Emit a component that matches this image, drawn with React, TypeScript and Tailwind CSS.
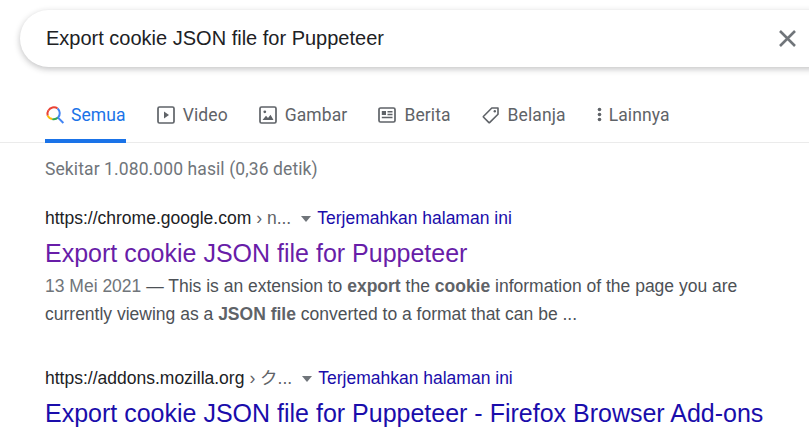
import React from "react";

const Tab = ({ icon, label, gap = "gap-[8px]", active = false }: { icon: React.ReactNode; label: string; gap?: string; active?: boolean }) => (
  <div className={`relative flex h-[58px] items-center ${gap} ${active ? "text-[#1a73e8]" : "text-[#5f6368]"}`}>
    {icon}
    <span className="pt-[4px] text-[17.5px] leading-none tracking-[0.1px]">{label}</span>
    {active && <div className="absolute bottom-0 left-0 right-0 h-[4px] bg-[#1a73e8]" />}
  </div>
);

const G = "#5f6368";
const SearchIcon = () => (
  <svg width="20" height="20" viewBox="0 0 20 20" fill="none" strokeWidth="2" className="mt-[2px]">
    <path d="M12.6 3.5A6.3 6.3 0 0 0 3.3 5.6" stroke="#ea4335" />
    <path d="M3.3 5.6a6.3 6.3 0 0 0-.6 5" stroke="#ea4335" />
    <path d="M2.7 10.6a6.3 6.3 0 0 0 4.6 3.5" stroke="#fbbc05" />
    <path d="M7.3 14.1a6.3 6.3 0 0 0 5.7-1.5" stroke="#34a853" />
    <path d="M13 12.6a6.3 6.3 0 0 0-.4-9.1" stroke="#4285f4" />
    <path d="M13 12.6l5.4 5.4" stroke="#4285f4" />
  </svg>
);
const VideoIcon = () => (
  <svg width="18" height="18" viewBox="0 0 18 18" fill="none" className="mt-[2px]">
    <rect x="1" y="1" width="16" height="16" rx="1.5" stroke={G} strokeWidth="1.7" />
    <path d="M7 5.5v7l5-3.5z" fill={G} />
  </svg>
);
const ImageIcon = () => (
  <svg width="18" height="18" viewBox="0 0 18 18" fill="none" className="mt-[2px]">
    <rect x="1" y="1" width="16" height="16" rx="1.5" stroke={G} strokeWidth="1.7" />
    <circle cx="5.8" cy="5.8" r="1.4" fill={G} />
    <path d="M3.5 14l3.5-4.2 2 2.2 2.5-3.2 3 5.2z" fill={G} />
  </svg>
);
const NewsIcon = () => (
  <svg width="18" height="18" viewBox="0 0 18 18" fill="none" className="mt-[2px]">
    <rect x="1" y="2" width="16" height="14" rx="1.5" stroke={G} strokeWidth="1.7" />
    <rect x="3.8" y="5" width="4.2" height="4" fill={G} />
    <path d="M9.5 5.7h5M9.5 8.4h5M3.8 11.6h10.7" stroke={G} strokeWidth="1.5" />
  </svg>
);
const TagIcon = () => (
  <svg width="18" height="18" viewBox="0 0 18 18" fill="none" className="mt-[2px]">
    <path d="M1.6 10.2L9.8 2h6.2v6.2l-8.2 8.2a.8.8 0 0 1-1.1 0L1.6 11.3a.8.8 0 0 1 0-1.1z" stroke={G} strokeWidth="1.6" strokeLinejoin="round" />
    <circle cx="12.8" cy="5.2" r="1.2" fill={G} />
  </svg>
);
const DotsIcon = () => (
  <svg width="5" height="15" viewBox="0 0 5 15" fill={G} className="mt-[2px]">
    <circle cx="2.5" cy="2.5" r="1.8" />
    <circle cx="2.5" cy="7.5" r="1.8" />
    <circle cx="2.5" cy="12.5" r="1.8" />
  </svg>
);

const Caret = () => <span className="mx-[6px] h-0 w-0 border-x-[5.5px] border-t-[6px] border-x-transparent border-t-[#70757a]" />;

const Meta = ({ site, crumb }: { site: string; crumb: string }) => (
  <div className="flex h-[24px] items-center whitespace-nowrap text-[17.5px] leading-none">
    <span className="text-[#202124]">{site}</span>
    <span className="pl-[5px] text-[#5f6368]" style={{ fontFamily: '"Liberation Sans", "Noto Sans CJK JP", sans-serif' }}>{crumb}</span>
    <span className="w-[4px]" />
    <Caret />
    <span className="text-[#1a0dab]">Terjemahkan halaman ini</span>
  </div>
);

export default function App() {
  return (
    <div className="h-[427px] w-[809px] overflow-hidden bg-white" style={{ fontFamily: '"Liberation Sans", Arial, sans-serif' }}>
      <div className="pl-[20px] pt-[10px]">
        <div className="flex h-[57px] w-[820px] items-center rounded-l-[29px] bg-white pl-[26px] shadow-[0_2px_6px_rgba(32,33,36,0.28)]">
          <span className="pb-[2px] text-[20px] leading-none text-[#202124]">Export cookie JSON file for Puppeteer</span>
          <svg className="ml-[394px]" width="19" height="19" viewBox="0 0 19 19" stroke="#70757a" strokeWidth="2.6" fill="none">
            <path d="M2 2l15 15M17 2L2 17" />
          </svg>
        </div>
      </div>

      <div className="mt-[18px] flex h-[58px] items-center gap-[31px] border-b border-[#ebebeb] pl-[45px]" style={{ fontFamily: 'Roboto, sans-serif' }}>
        <Tab active icon={<SearchIcon />} label="Semua" gap="gap-[6px]" />
        <Tab icon={<VideoIcon />} label="Video" />
        <Tab icon={<ImageIcon />} label="Gambar" />
        <Tab icon={<NewsIcon />} label="Berita" />
        <Tab icon={<TagIcon />} label="Belanja" />
        <Tab icon={<DotsIcon />} label="Lainnya" gap="gap-[7px]" />
      </div>

      <div className="pl-[45px]">
        <div className="flex h-[54px] items-center text-[17.5px] leading-none tracking-[0.1px] text-[#70757a]" style={{ fontFamily: 'Roboto, sans-serif' }}>
          Sekitar 1.080.000 hasil (0,36 detik)
        </div>

        <div className="mt-[10px]">
          <Meta site="https://chrome.google.com" crumb="› n..." />
          <div className="mt-[5px] h-[34px] whitespace-nowrap text-[25px] leading-[34px] text-[#681da8]">Export cookie JSON file for Puppeteer</div>
          <div className="mt-[2px] text-[17.5px] leading-[28px] text-[#4d5156]">
            <span className="text-[#70757a]">13 Mei 2021</span> — This is an extension to <b className="text-[#5f6368]">export</b> the <b className="text-[#5f6368]">cookie</b> information of the page you are
            <br />
            currently viewing as a <b className="text-[#5f6368]">JSON file</b> converted to a format that can be ...
          </div>
        </div>

        <div className="mt-[39px]">
          <Meta site="https://addons.mozilla.org" crumb="› ク..." />
          <div className="mt-[5px] h-[34px] whitespace-nowrap text-[25px] leading-[34px] text-[#1a0dab]">Export cookie JSON file for Puppeteer - Firefox Browser Add-ons</div>
        </div>
      </div>
    </div>
  );
}
